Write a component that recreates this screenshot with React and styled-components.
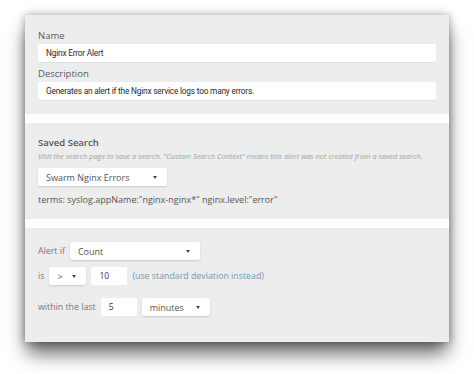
import React from 'react';
import styled, { createGlobalStyle } from 'styled-components';

const GlobalStyle = createGlobalStyle`
  html, body {
    margin: 0;
    padding: 0;
    background: #ffffff;
  }
  body {
    font-family: "Open Sans", "Liberation Sans", sans-serif;
  }
`;

const Page = styled.div`
  padding: 15px 25px 34px 25px;
  width: 424px;
`;

const Panel = styled.div`
  background: #ffffff;
  display: flex;
  flex-direction: column;
  gap: 9px;
  box-shadow: 0 13px 18px -2px rgba(0, 0, 0, 0.62), 0 0 8px rgba(0, 0, 0, 0.35);
`;

const Section = styled.div`
  background: #ededed;
  padding: ${(p) => p.padding || '13px'};
`;

const Label = styled.div`
  font-size: 9.5px;
  line-height: 13px;
  color: #5a5a5a;
  margin: ${(p) => p.margin || '0 0 2px 0'};
`;

const Title = styled.div`
  font-size: 9.5px;
  line-height: 13px;
  font-weight: 600;
  color: #555;
`;

const Hint = styled.div`
  font-size: 7.4px;
  line-height: 10px;
  font-style: italic;
  color: #a2a2a2;
  margin-top: 2px;
  white-space: nowrap;
`;

const TextInput = styled.div`
  height: 18px;
  background: #fff;
  border-radius: 2px;
  display: flex;
  align-items: center;
  padding: 0 8px;
  box-sizing: border-box;
  font-family: "Roboto", "Open Sans", sans-serif;
  font-size: 8.3px;
  letter-spacing: -0.2px;
  color: #2a2a2a;
  box-shadow: 0 1px 1px rgba(0, 0, 0, 0.06);
`;

const Select = styled.div`
  height: 18px;
  width: ${(p) => p.width};
  background: #fff;
  border-radius: 2px;
  display: flex;
  align-items: center;
  justify-content: space-between;
  padding: 0 10px 0 8px;
  box-sizing: border-box;
  font-size: 9px;
  color: #555;
  box-shadow: 0 1px 2px rgba(0, 0, 0, 0.15);
  margin-top: ${(p) => p.top || '0'};
`;

const Caret = styled.span`
  width: 0;
  height: 0;
  border-left: 2.5px solid transparent;
  border-right: 2.5px solid transparent;
  border-top: 3px solid #444;
`;

const Terms = styled.div`
  font-size: 9px;
  line-height: 13px;
  color: #555;
  margin-top: 7px;
`;

const Row = styled.div`
  display: flex;
  align-items: center;
  gap: 5px;
  margin-top: ${(p) => p.top || '0'};
  font-size: 8.8px;
  color: #777;
`;

const NumInput = styled.div`
  height: 18px;
  width: ${(p) => p.width};
  background: #fff;
  border-radius: 2px;
  box-sizing: border-box;
  padding: 0 8px;
  display: flex;
  align-items: center;
  font-size: 8.6px;
  color: #333;
`;

const Link = styled.span`
  color: #6d9ab3;
  font-size: 8.8px;
`;

const Dropdown = ({ width, top, children }) => (
  <Select width={width} top={top}>
    <span>{children}</span>
    <Caret />
  </Select>
);

export default function App() {
  return (
    <>
      <GlobalStyle />
      <Page>
        <Panel>
          <Section padding="14px 13px 14px 13px">
            <Label>Name</Label>
            <TextInput>Nginx Error Alert</TextInput>
            <Label margin="5px 0 2px 0">Description</Label>
            <TextInput>Generates an alert if the Nginx service logs too many errors.</TextInput>
          </Section>

          <Section>
            <Title>Saved Search</Title>
            <Hint>
              Visit the search page to save a search. "Custom Search Context" means this alert was not created from a saved search.
            </Hint>
            <Dropdown width="129px" top="7px">Swarm Nginx Errors</Dropdown>
            <Terms>terms: syslog.appName:"nginx-nginx*" nginx.level:"error"</Terms>
          </Section>

          <Section padding="14px 13px 26px 13px">
            <Row>
              Alert if
              <Dropdown width="130px">Count</Dropdown>
            </Row>
            <Row top="7px">
              is
              <Dropdown width="37px">&gt;</Dropdown>
              <NumInput width="36px">10</NumInput>
              <Link>(use standard deviation instead)</Link>
            </Row>
            <Row top="13px">
              within the last
              <NumInput width="36px">5</NumInput>
              <Dropdown width="68px">minutes</Dropdown>
            </Row>
          </Section>
        </Panel>
      </Page>
    </>
  );
}
